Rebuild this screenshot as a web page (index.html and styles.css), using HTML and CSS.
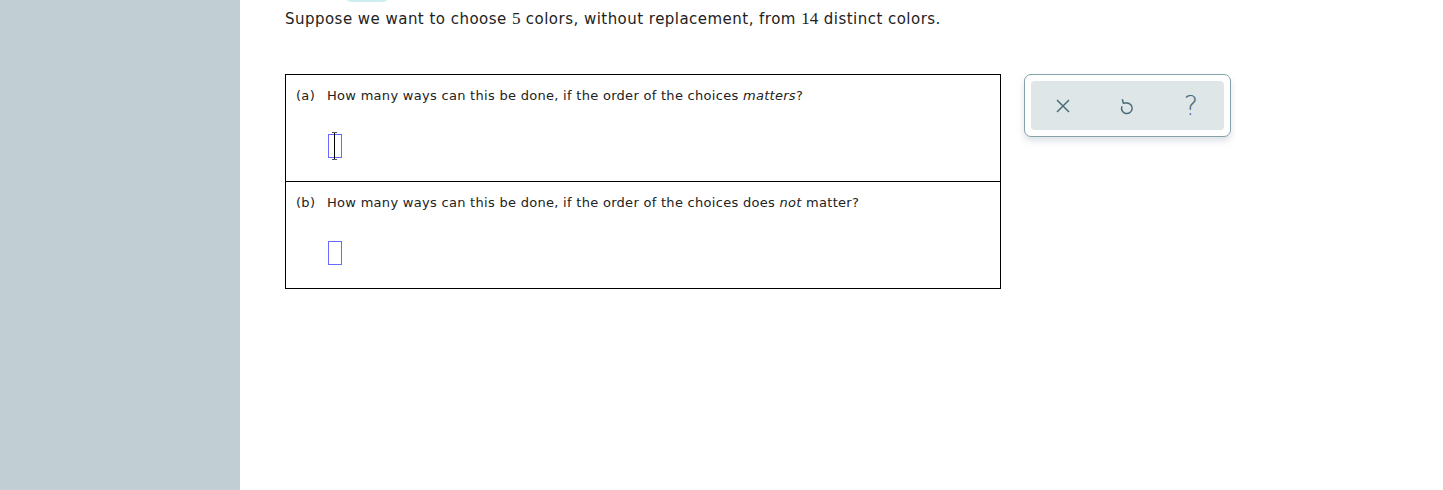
FILE: index.html
```html
<!DOCTYPE html>
<html>
<head>
<meta charset="utf-8">
<link rel="stylesheet" href="styles.css">
</head>
<body>
<div class="page">
  <aside class="sidebar"></aside>
  <main class="content">
    <div class="pill"></div>
    <p class="intro">Suppose we want to choose <span class="num">5</span> colors, without replacement, from <span class="num">14</span> distinct colors.</p>
    <div class="work">
      <div class="questions">
        <div class="q">
          <div class="qtext"><span class="lbl">(a)</span>How many ways can this be done, if the order of the choices <em>matters</em>?</div>
          <div class="ans"><span class="box active"><span class="caret"></span></span></div>
        </div>
        <div class="q">
          <div class="qtext"><span class="lbl">(b)</span>How many ways can this be done, if the order of the choices does <em>not</em> matter?</div>
          <div class="ans"><span class="box"></span></div>
        </div>
      </div>
      <div class="tools">
        <div class="tools-inner">
          <button class="tbtn" aria-label="clear"><svg width="14" height="14" viewBox="0 0 14 14"><path d="M1 1 L13 13 M13 1 L1 13" stroke="#4a6d7a" stroke-width="1.5" fill="none"/></svg></button>
          <button class="tbtn" aria-label="undo"><svg width="14" height="20" viewBox="0 0 14 20"><path d="M6.8 7 A5.3 5.3 0 1 1 2 10.2" stroke="#4a6d7a" stroke-width="1.5" fill="none"/><path d="M2.3 3.2 L3.4 7.3 L7.2 6.8" stroke="#4a6d7a" stroke-width="1.5" fill="none" stroke-linejoin="round"/></svg></button>
          <button class="tbtn q-mark" aria-label="help">?</button>
        </div>
      </div>
    </div>
  </main>
</div>
</body>
</html>
```
FILE: styles.css
```css
html, body { margin: 0; padding: 0; background: #fff; }
body { font-family: Verdana, "DejaVu Sans", sans-serif; color: #222; }
.page { display: flex; height: 490px; overflow: hidden; }
.sidebar { width: 240px; flex: none; background: #c1ced4; }
.content { flex: 1; padding-left: 45px; position: relative; }
.pill { position: absolute; left: 106px; top: -8px; width: 42px; height: 10px; border-radius: 5px; background: #cdedf2; }
.intro { margin: 10px 0 0; font-size: 15px; line-height: 18px; letter-spacing: 0.47px; color: #222; }
.num { font-family: "Liberation Serif", serif; font-size: 17px; letter-spacing: 0.2px; }
.work { display: flex; align-items: flex-start; margin-top: 46px; }
.questions { width: 716px; border: 1px solid #000; box-sizing: border-box; }
.q { height: 106px; box-sizing: border-box; padding: 13px 0 0 10px; }
.q + .q { border-top: 1px solid #000; height: 107px; }
.qtext { font-size: 13px; line-height: 16px; letter-spacing: 0.29px; color: #222; }
.lbl { display: inline-block; width: 31px; letter-spacing: 0.3px; }
.ans { padding: 30px 0 0 32px; }
.box { display: block; width: 14px; height: 24px; box-sizing: border-box; border: 1.5px solid #6a6aff; position: relative; }
.caret { position: absolute; left: 5px; top: -3px; width: 1px; height: 28px; background: #000; }
.caret::before, .caret::after { content: ""; position: absolute; left: -2px; width: 5px; height: 1px; background: #555; }
.caret::before { top: 0; }
.caret::after { bottom: 0; }
.tools { margin-left: 23px; width: 207px; height: 63px; box-sizing: border-box; border: 1px solid #86a1aa; border-radius: 7px; padding: 6px; background: #fff; box-shadow: 0 4px 6px rgba(120, 140, 150, 0.25); }
.tools-inner { height: 49px; background: #dfe6e8; border-radius: 4px; display: flex; align-items: center; gap: 34px; padding-left: 17px; }
.tbtn { border: none; background: none; padding: 0; width: 30px; height: 30px; display: flex; align-items: center; justify-content: center; color: #4a6d7a; cursor: pointer; }
.q-mark { font-family: "DejaVu Sans", sans-serif; font-size: 27px; font-weight: 300; }
```
